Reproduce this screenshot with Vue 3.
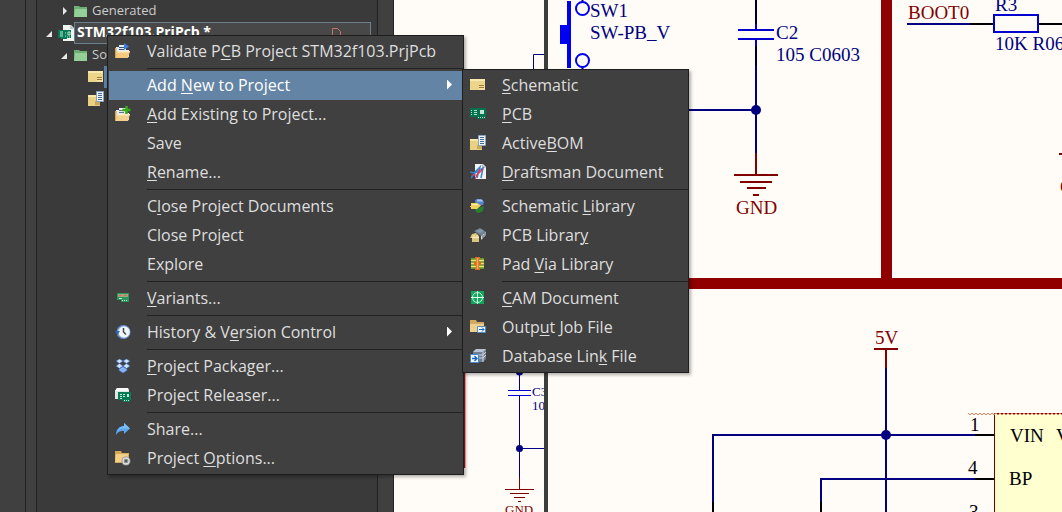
<script setup>
const tree = [
  { level: 1, arrow: 'closed', icon: 'folder', label: 'Generated' },
  { level: 0, arrow: 'open', icon: 'project', label: 'STM32f103.PrjPcb *', active: true },
  { level: 1, arrow: 'open', icon: 'folder', label: 'Source Documents' },
  { level: 2, icon: 'schematic', label: '', selected: true },
  { level: 2, icon: 'bom', label: '' },
]

// "&" marks the access key of an entry, "&&" a literal ampersand
const projectMenu = [
  [{ text: 'Validate P&CB Project STM32f103.PrjPcb', icon: 'validate' }],
  [
    { text: 'Add &New to Project', arrow: true, active: true },
    { text: '&Add Existing to Project...', icon: 'existing' },
    { text: 'Save' },
    { text: '&Rename...' },
  ],
  [{ text: 'C&lose Project Documents' }, { text: 'Close Project' }, { text: 'Explore' }],
  [{ text: '&Variants...', icon: 'variants' }],
  [{ text: 'History && V&ersion Control', icon: 'history', arrow: true }],
  [
    { text: '&Project Packager...', icon: 'packager' },
    { text: 'Project Releaser...', icon: 'releaser' },
  ],
  [{ text: 'Share...', icon: 'share' }, { text: 'Project &Options...', icon: 'options' }],
]

const newMenu = [
  [
    { text: '&Schematic', icon: 'schematic' },
    { text: '&PCB', icon: 'pcb' },
    { text: 'Active&BOM', icon: 'bom' },
    { text: '&Draftsman Document', icon: 'draftsman' },
  ],
  [
    { text: 'Schematic &Library', icon: 'schlib' },
    { text: 'PCB Librar&y', icon: 'pcblib' },
    { text: 'Pad &Via Library', icon: 'padvia' },
  ],
  [
    { text: '&CAM Document', icon: 'cam' },
    { text: 'Outp&ut Job File', icon: 'output' },
    { text: 'Database Lin&k File', icon: 'database' },
  ],
]

const menus = [
  { name: 'project', label: 'Project', groups: projectMenu },
  { name: 'new', label: 'Add New to Project', groups: newMenu },
]

function parts(text) {
  const m = text.match(/^(.*?[^&]|)&([^&\s])(.*)$/)
  const clean = (s) => s.replace('&&', '&')
  return m ? [clean(m[1]), m[2], clean(m[3])] : [clean(text), '', '']
}
</script>

<template>
  <div class="app">
    <svg class="defs" aria-hidden="true">
      <symbol id="folder" viewBox="0 0 16 16">
        <path d="M1 3h5l1 1h7v10H1z" fill="#6fae75" />
        <path d="M2 6h12v8H1z" fill="#93cf97" />
      </symbol>
      <symbol id="project" viewBox="0 0 16 16">
        <path d="M5 0h8l3 3v13H5z" fill="#f1f5f2" />
        <path d="M12 0v4h4z" fill="#b3c9bd" />
        <path d="M0 5h13v8H9v1H3v-1H0z" fill="#087b55" />
        <path d="M2 7h3M2 9h3M2 11h3M7 8h1M10 7h2v3h-2zM7 11h1M9 12h1M11 12h1" stroke="#b9ead4" fill="none" />
      </symbol>
      <symbol id="schematic" viewBox="0 0 16 16">
        <path d="M0 2h15v11H0z" fill="#ecd58a" />
        <path d="M0 2h15v2H0z" fill="#f8e9ae" />
        <path d="M9 8h6v5H9z" fill="#f4dfa0" />
        <path d="M9 8.500h5M9 10.500h5" stroke="#98783a" fill="none" />
      </symbol>
      <symbol id="bom" viewBox="0 0 16 16">
        <path d="M0 4h12v11H0z" fill="#e9d181" />
        <path d="M0 4h12v2H0z" fill="#f8e7aa" />
        <path d="M7 10h5v4H7z" fill="#c9a95d" />
        <path d="M8.500 .5h7v10h-7z" fill="#eef4fc" stroke="#88a3bd" />
        <path d="M10 2.500h4M10 4.500h4M10 6.500h4M10 8.500h4" stroke="#44698f" />
      </symbol>
      <symbol id="validate" viewBox="0 0 16 16">
        <path d="M1 4h3V2h7v5h3v7H1z" fill="#e5ebf2" />
        <path d="M4 4.500h5M4 6.500h5" stroke="#345180" />
        <path d="M9 0l5 3.500-5 3.500z" fill="#3f7de0" />
        <path d="M3 8h12l-2 7H0z" fill="#f5ca7e" />
        <path d="M3 8h12l-.4 1.500H2.500z" fill="#ffe9ba" />
        <path d="M0 5h1.500v8L0 15z" fill="#dba851" />
      </symbol>
      <symbol id="existing" viewBox="0 0 16 16">
        <path d="M1 4h3V2h7v5h3v7H1z" fill="#e5ebf2" />
        <path d="M4 4.500h5M4 6.500h5" stroke="#6a7180" />
        <path d="M3 8h12l-2 7H0z" fill="#f3d08f" />
        <path d="M3 8h12l-.4 1.500H2.500z" fill="#ffebc0" />
        <path d="M0 5h1.500v8L0 15z" fill="#dba851" />
        <path d="M11.500 0v8M7.500 4h8" stroke="#35ad18" stroke-width="2.600" />
      </symbol>
      <symbol id="variants" viewBox="0 0 16 16">
        <path d="M2 3h12v9H6v-2H2z" fill="#2b9560" />
        <path d="M3 4h10v3H3z" fill="#9ca77c" />
        <path d="M4 5.500h3M9 5.500h3" stroke="#d86b64" />
        <path d="M4 8.500h3M7 10.500h1M9 10.500h1M11 10.500h1" stroke="#b7ecd0" />
      </symbol>
      <symbol id="history" viewBox="0 0 16 16">
        <circle cx="8.500" cy="8" r="7" fill="#6695d1" />
        <circle cx="9" cy="8" r="5.800" fill="#f2f5fa" />
        <path d="M0 7h5l-2.500 4z" fill="#2c69b4" />
        <path d="M8.500 4v4l2.500 2.500" fill="none" stroke="#44484f" stroke-width="1.500" />
      </symbol>
      <symbol id="packager" viewBox="0 0 16 16">
        <path d="M4.500 1L8 3 4.500 5.500 1 3zM11.500 1L15 3l-3.500 2.500L8 3zM4.500 5.500L8 8l-3.500 2.500L1 8zM11.500 5.500L15 8l-3.500 2.500L8 8z" fill="#cfe2ff" stroke="#3764b5" stroke-width=".6" />
        <path d="M4 11l4-2.500 4 2.500v1.500L8 15l-4-2.500z" fill="#87b3f2" stroke="#3764b5" stroke-width=".6" />
      </symbol>
      <symbol id="releaser" viewBox="0 0 16 16">
        <path d="M2 1h11l1 3v8H0V4z" fill="#dce8e3" />
        <path d="M2 1h11l1 3H0z" fill="#f8faf9" />
        <path d="M3 5h13v8h-1v2H8v-2H3z" fill="#087a54" />
        <path d="M5 7.500h2M8 7.500h2M5 9.500h2M8 9.500h2M5 11.500h2M9 13.500h1M11 13.500h1M13 13.500h1" stroke="#bdebd8" fill="none" />
        <path d="M12 7h2v3h-2z" fill="#bdebd8" />
      </symbol>
      <symbol id="share" viewBox="0 0 16 16">
        <path d="M9 2l6 5.500L9 13V10C5 9.500 3 11 1 14 1 8.500 4 5.500 9 5z" fill="#5ba5ed" />
        <path d="M9 2l6 5.500H8C5 7.500 3 9 2 11 3 7.500 5 5.500 9 5z" fill="#79bcf7" />
      </symbol>
      <symbol id="options" viewBox="0 0 16 16">
        <path d="M0 1h6l1 2h7v10H0z" fill="#d5a95c" />
        <path d="M1 4h12v8H0z" fill="#f5cf86" />
        <circle cx="11" cy="11" r="4.500" fill="#8e8e8e" />
        <circle cx="11" cy="11" r="3" fill="none" stroke="#dedede" stroke-width="1.300" />
        <path d="M10 11h2" stroke="#444" stroke-width="1.500" />
      </symbol>
      <symbol id="pcb" viewBox="0 0 16 16">
        <path d="M0 2h16v9h-1v2H7v-2H0z" fill="#08724f" />
        <path d="M1 4.500h1M4 4.500h3M1 6.500h1M4 6.500h3M1 8.500h1M4 8.500h3M8 11.500h1M10 11.500h1M12 11.500h1M14 11.500h1" stroke="#a7e6ca" />
        <path d="M10 4h4v4h-4z" fill="#c3e5d8" />
      </symbol>
      <symbol id="draftsman" viewBox="0 0 16 16">
        <path d="M5 0h8l3 3v12H5z" fill="#f2f3f6" />
        <path d="M12 0v4h4z" fill="#b5b9c1" />
        <path d="M0 8l4 1 6-6-3 11M1 14l4-5 8-5-2 10" fill="none" stroke="#3b82cb" stroke-width="1.500" />
        <path d="M1 11h6l6-6M5 15l5-10" fill="none" stroke="#d63b58" stroke-width="1.200" />
      </symbol>
      <symbol id="schlib" viewBox="0 0 16 16">
        <path d="M5 2c3-2 8-1 9 2l-1 3-7 1z" fill="#5786cc" />
        <path d="M7 1.500h5l1 2H7z" fill="#a6c6f3" />
        <path d="M5 11l9-3-1 5-4 2-3-1z" fill="#268030" />
        <path d="M1 5h6l4 2.500-4 3.500H1v-2H0V8h1z" fill="#f0d35e" />
        <path d="M2 6h5l2 1H2z" fill="#fff2a3" />
      </symbol>
      <symbol id="pcblib" viewBox="0 0 16 16">
        <path d="M4 4l6-3 6 4-5 4z" fill="#71818f" />
        <path d="M6 4l5-2 3 2-4 2z" fill="#8798a8" />
        <path d="M11 9l5-4v3l-5 5z" fill="#d1dce5" />
        <path d="M13 8v3M15 6v3" stroke="#4b5963" />
        <path d="M2 7l4-1 3 3v6H2v-4H0z" fill="#dbc47e" />
        <path d="M4 8v3M7 8v2M2 10.500h7" stroke="#fff0b8" fill="none" />
      </symbol>
      <symbol id="padvia" viewBox="0 0 16 16">
        <path d="M1 2h13v11H1z" fill="#5f9a2e" />
        <path d="M1 4.500h13M1 7.500h13M1 10.500h13" stroke="#eee36b" stroke-width="1.500" />
        <path d="M5 1h5v2l-1 1v1l2 1v3l-2 1v1l1 1v2H5v-2l1-1v-1L4 9V6l2-1V4L5 3z" fill="#db6c2d" />
        <path d="M7.500 2v11" stroke="#ffae4c" stroke-width="1.500" />
      </symbol>
      <symbol id="cam" viewBox="0 0 16 16">
        <path d="M1 1h13v13H1z" fill="#12a65d" />
        <path d="M7.500 1v13M1 7.500h13" stroke="#e0fff0" />
        <path d="M5.500 2.500v3h-3M9.500 2.500v3h3M5.500 12.500v-3h-3M9.500 12.500v-3h3" fill="none" stroke="#12a65d" />
        <circle cx="7.500" cy="7.500" r="5" fill="none" stroke="#c4f3da" />
      </symbol>
      <symbol id="output" viewBox="0 0 16 16">
        <path d="M0 1h6l1 2h7v10H0z" fill="#d3aa61" />
        <path d="M0 5h14v8H0z" fill="#efd08e" />
        <path d="M7.500 7.500h8v6h-8z" fill="#eff7ff" stroke="#568ac0" />
        <path d="M9 10.500h5M12 8.500l2 2-2 2" fill="none" stroke="#1566b7" />
      </symbol>
      <symbol id="database" viewBox="0 0 16 16">
        <path d="M3 4l3-3h10v10l-3 3H3z" fill="#717f93" />
        <path d="M3 4l3-3h10l-3 3z" fill="#b9c4d3" />
        <path d="M3 7h10l3-3M3 10h10l3-3M13 4v10" fill="none" stroke="#ccd5e1" />
        <path d="M.5 6.500h8v8h-8z" fill="#f5faff" stroke="#4386ca" />
        <path d="M2 10.500h5M4.500 8l2.500 2.500L4.500 13" fill="none" stroke="#1566b7" stroke-width="1.400" />
      </symbol>
    </svg>

    <aside class="dock">
      <div class="rail"></div>
      <div class="gutter"></div>
      <ul class="tree">
        <li v-for="(row, r) in tree" :key="r" class="row" :class="['level' + row.level, { active: row.active, selected: row.selected }]">
          <span class="twist" :class="row.arrow"></span>
          <svg class="icon"><use :href="'#' + row.icon" /></svg>
          <span class="label">{{ row.label }}</span>
          <svg v-if="row.active" class="modified" viewBox="0 0 9 12">
            <path d="M1 .5h4.500l3 3v8H.5V.5z" fill="none" stroke="#c5736f" />
          </svg>
        </li>
      </ul>
      <div class="edge"></div>
    </aside>

    <main class="sheets">
      <section class="sheet preview">
        <svg class="drawing">
          <g transform="translate(-394 0)" fill="none" stroke="#000080">
            <path d="M544 54.500H533.500V80" />
            <path d="M464.500 300V468" stroke="#b01018" />
            <path d="M465.500 300V468" stroke="#f3b8b4" />
            <path d="M519.500 370V391M519.500 396V480M519 448.500H544" />
            <path d="M508 390.500h23M508 395.500h23" stroke="#0000d0" />
            <circle cx="519.500" cy="372" r="3.500" fill="#000080" stroke="none" />
            <circle cx="519.500" cy="448.500" r="3.500" fill="#000080" stroke="none" />
            <path d="M519.500 478V489M505 489.500h29M510 493.500h19M514 497.500h11M518 501.500h3" stroke="#800000" />
            <g class="small" fill="#000080" stroke="none">
              <text x="532" y="396">C3</text>
              <text x="532" y="410">105</text>
              <text x="505" y="514" fill="#800000">GND</text>
            </g>
          </g>
        </svg>
      </section>
      <div class="splitter"></div>
      <section class="sheet editor">
        <svg class="drawing">
          <g transform="translate(-548 0)" fill="none" stroke="#000080" stroke-width="2">
            <path d="M886.500 0V283M548 283.500H2000" stroke="#900000" stroke-width="11" />

            <path d="M569 1V68" stroke="#0000f0" stroke-width="4" />
            <path d="M560 25h8v19h-8z" fill="#0000f0" stroke="none" />
            <path d="M582.500 0V2M582.500 67V72" />
            <circle cx="582.500" cy="8.500" r="6.500" stroke="#0000f0" />
            <circle cx="582.500" cy="60.500" r="6.500" stroke="#0000f0" />

            <path d="M756 65V153M689 110H756" />
            <path d="M756 0V24M756 46V66" stroke="#00001c" />
            <path d="M756 24V30M756 39V46M738 30h36M738 39h36" stroke="#0000d0" />
            <circle cx="756" cy="110" r="5" fill="#000080" stroke="none" />
            <path d="M756 153V175M734 175h44M740 182h32M747 188h19M753 195h6" stroke="#800000" />

            <path d="M907 24H970" />
            <path d="M970 24H993M1038 24H2000" stroke="#000" />
            <path d="M994 15h44v17h-44z" stroke="#0000d0" />
            <path d="M1059 154h44" stroke="#800000" />

            <path d="M874 349h24M886 349V368" stroke="#800000" />
            <path d="M886 368V2000M713 502V435H975M821 502V479H975" />
            <path d="M713 502V2000M821 502V2000M975 435h19M975 479h19" stroke="#000" />
            <circle cx="886" cy="435" r="5" fill="#000080" stroke="none" />
            <path d="M994.500 413.500H2000V2000H994.500z" fill="#ffffd0" stroke="#7a0000" stroke-width="1" />
            <path d="M968 413l2 2 2-2 2 2 2-2 2 2 2-2 2 2 2-2 2 2 2-2 2 2 2-2 2 2 2-2 2 2 2-2 2 2 2-2 2 2 2-2 2 2 2-2 2 2 2-2 2 2 2-2 2 2 2-2 2 2 2-2 2 2 2-2 2 2 2-2 2 2 2-2 2 2 2-2 2 2 2-2 2 2 2-2 2 2 2-2 2 2 2-2 2 2" stroke="#e08060" stroke-width="1" />

            <g fill="#000080" stroke="none">
              <text x="590" y="17">SW1</text>
              <text x="590" y="39">SW-PB_V</text>
              <text x="776" y="39">C2</text>
              <text x="776" y="61">105 C0603</text>
              <text x="995" y="11">R3</text>
              <text x="995" y="50">10K R0603</text>
            </g>
            <g fill="#800000" stroke="none">
              <text x="736" y="214">GND</text>
              <text x="908" y="19">BOOT0</text>
              <text x="875" y="344">5V</text>
              <text x="1060" y="193">GND</text>
            </g>
            <g fill="#000" stroke="none">
              <text x="970" y="431">1</text>
              <text x="968" y="474">4</text>
              <text x="969" y="518">3</text>
              <text x="1010" y="442">VIN</text>
              <text x="1056" y="442">VOUT</text>
              <text x="1009" y="485">BP</text>
            </g>
          </g>
        </svg>
      </section>
    </main>

    <div v-for="menu in menus" :key="menu.name" class="menu" :class="menu.name" role="menu" :aria-label="menu.label">
      <div v-for="(group, g) in menu.groups" :key="g" class="group" role="group">
        <button v-for="item in group" :key="item.text" type="button" role="menuitem" class="item" :class="{ current: item.active }">
          <svg class="icon" aria-hidden="true"><use v-if="item.icon" :href="'#' + item.icon" /></svg>
          <span class="caption">{{ parts(item.text)[0] }}<u v-if="parts(item.text)[1]">{{ parts(item.text)[1] }}</u>{{ parts(item.text)[2] }}</span>
          <span v-if="item.arrow" class="more"></span>
        </button>
      </div>
    </div>
  </div>
</template>

<style>
body {
  margin: 0;
  overflow: hidden;
}
</style>

<style scoped>
.app {
  position: relative;
  display: flex;
  min-height: 100vh;
  overflow: hidden;
  background: #fffcf7;
  font-family: "Open Sans", "Noto Sans", sans-serif;
}
.defs {
  position: absolute;
  width: 0;
  height: 0;
}
.icon {
  flex: none;
  width: 16px;
  height: 16px;
}

.dock {
  display: flex;
  flex: none;
  width: 394px;
  box-sizing: border-box;
  background: #404040;
  border-right: 1px solid #242424;
}
.rail {
  width: 25px;
  border-right: 1px solid #222;
}
.gutter {
  width: 10px;
  border-right: 1px solid #222;
}
.tree {
  flex: 1;
  min-width: 0;
  margin: 0;
  padding: 0;
  list-style: none;
  background: #3a3a3a;
}
.edge {
  width: 15px;
  border-left: 1px solid #222;
}
.row {
  position: relative;
  display: flex;
  align-items: center;
  height: 22px;
  padding: 0 6px 0 9px;
  color: #ccc;
  font-size: 13px;
  line-height: 18px;
  white-space: nowrap;
}
.level1 {
  padding-left: 24px;
}
.level2 {
  padding-left: 39px;
}
.twist {
  flex: none;
  width: 12px;
  height: 8px;
}
.twist::before {
  content: "";
  display: block;
}
.closed::before {
  width: 4px;
  height: 8px;
  margin-left: 2px;
  background: #e8e8e8;
  clip-path: polygon(0 0, 100% 50%, 0 100%);
}
.open::before {
  width: 6px;
  height: 6px;
  margin: 2px 0 0;
  background: #e8e8e8;
  clip-path: polygon(100% 0, 100% 100%, 0 100%);
}
.label {
  flex: 1;
  box-sizing: border-box;
  height: 22px;
  padding-left: 2px;
  border: 1px solid transparent;
}
.active .label {
  color: #fff;
  font-size: 14px;
  font-weight: bold;
  background: #484848;
  border-color: #6b7f8d;
}
.selected .label {
  background: #5b7ea2;
}
.modified {
  position: absolute;
  right: 36px;
  top: 6px;
  width: 9px;
  height: 12px;
}

.sheets {
  display: flex;
  flex: 1;
  min-width: 0;
}
.sheet {
  position: relative;
  overflow: hidden;
}
.preview {
  flex: none;
  width: 150px;
}
.editor {
  flex: 1;
}
.splitter {
  width: 4px;
  background: #3c3e3c;
}
.drawing {
  position: absolute;
  inset: 0;
  width: 100%;
  height: 100%;
  font-family: "Liberation Serif", serif;
  font-size: 19px;
}
.small {
  font-size: 13px;
}

.menu {
  position: absolute;
  box-sizing: border-box;
  padding: 1px 0 1px 1px;
  background: #404040;
  border: 1px solid #1e1e1e;
  box-shadow: 2px 2px 3px rgba(0, 0, 0, 0.3);
}
.project {
  left: 107px;
  top: 35px;
  min-width: 357px;
}
.new {
  left: 462px;
  top: 69px;
  min-width: 227px;
}
.group + .group::before {
  content: "";
  display: block;
  height: 1px;
  margin: 2px 0 2px 38px;
  background: #222;
}
.item {
  display: flex;
  align-items: center;
  gap: 16px;
  width: 100%;
  height: 29px;
  padding: 0 11px 2px 6px;
  border: 0;
  background: none;
  color: #dedede;
  font: inherit;
  font-size: 16px;
  line-height: 20px;
  text-align: left;
  white-space: nowrap;
}
.current {
  background: #6384a5;
  color: #fff;
}
.caption {
  flex: 1;
}
u {
  text-decoration-thickness: 1px;
  text-underline-offset: 2px;
}
.more {
  width: 5px;
  height: 10px;
  background: #fff;
  clip-path: polygon(0 0, 100% 50%, 0 100%);
}
</style>
